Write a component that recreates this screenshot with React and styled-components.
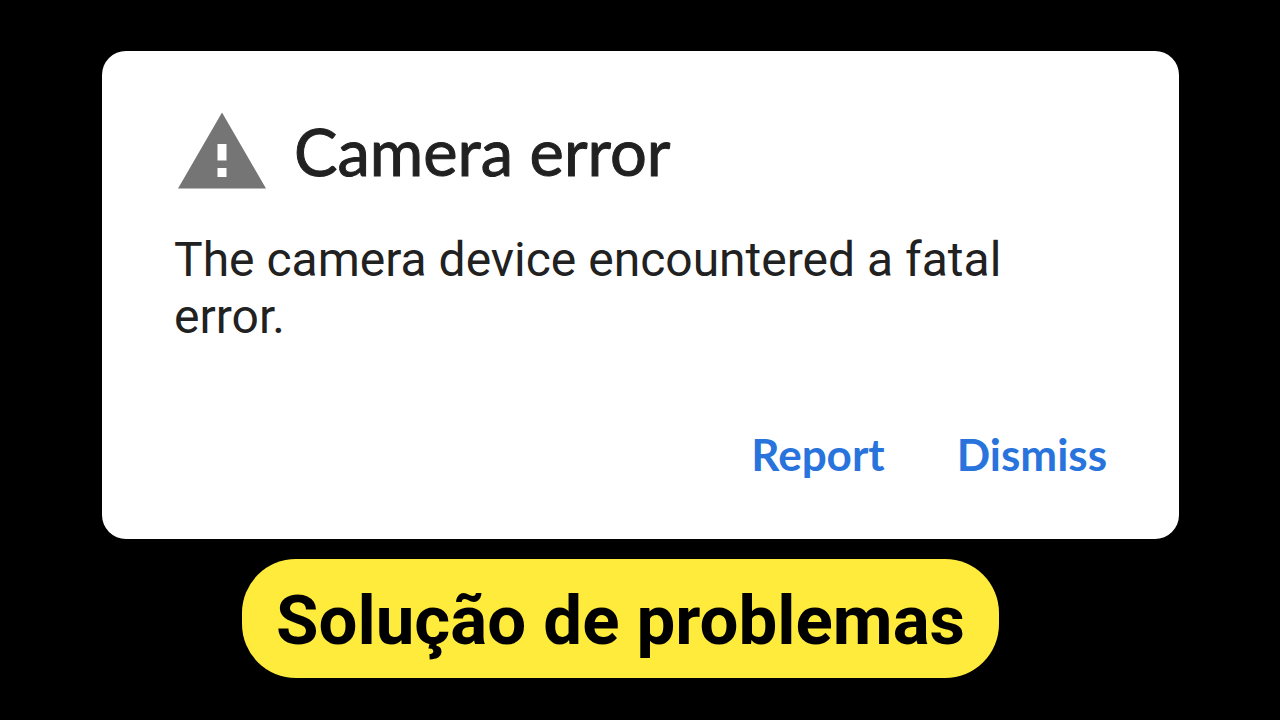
import styled, { createGlobalStyle } from "styled-components";

const GlobalStyle = createGlobalStyle`
  * {
    box-sizing: border-box;
  }
  body {
    margin: 0;
    background-color: #000;
  }
`;

const Page = styled.main`
  min-height: 100vh;
  display: flex;
  flex-direction: column;
  align-items: center;
  gap: 20px;
  padding: 51px 101px 42px 102px;
  font-family: Roboto, sans-serif;
`;

const Dialog = styled.section`
  width: 100%;
  padding: 60px 72px 56px;
  border-radius: 24px;
  background-color: #fff;
  color: #212121;
`;

const Header = styled.header`
  display: flex;
  align-items: center;
  gap: 27px;
  padding-left: 3px;
`;

const WarningIcon = styled.svg`
  width: 90px;
  height: 80px;
  fill: #757575;
`;

const Title = styled.h1`
  margin: 0;
  font-family: Lato, sans-serif;
  font-size: 65px;
  line-height: 80px;
  font-weight: 400;
  -webkit-text-stroke: 1px currentColor;
`;

const Message = styled.p`
  margin: 40px 0 0;
  font-size: 48px;
  line-height: 57px;
`;

const Actions = styled.div`
  display: flex;
  justify-content: flex-end;
  gap: 72px;
  margin-top: 80px;
`;

const ActionButton = styled.button`
  padding: 0;
  border: none;
  background: none;
  color: #2874dc;
  font-family: Lato, sans-serif;
  font-size: 44px;
  line-height: 58px;
  font-weight: 700;
  cursor: pointer;
`;

const Caption = styled.div`
  margin-right: 40px;
  padding: 22px 34px 18px;
  border-radius: 54px;
  background-color: #ffeb3b;
  color: #000;
  font-size: 69px;
  line-height: 79px;
  font-weight: 700;
`;

const App = () => {
  return (
    <>
      <GlobalStyle />
      <Page>
        <Dialog role="alertdialog" aria-labelledby="title" aria-describedby="message">
          <Header>
            <WarningIcon viewBox="0 0 90 80" aria-hidden="true">
              <path
                fillRule="evenodd"
                d="M1 77.5 45 1.5l44 76zM40.5 33v16.5h9V33zM40.5 57v9h9v-9z"
              />
            </WarningIcon>
            <Title id="title">Camera error</Title>
          </Header>
          <Message id="message">
            The camera device encountered a fatal error.
          </Message>
          <Actions>
            <ActionButton type="button">Report</ActionButton>
            <ActionButton type="button">Dismiss</ActionButton>
          </Actions>
        </Dialog>
        <Caption>Solução de problemas</Caption>
      </Page>
    </>
  );
};

export default App;
